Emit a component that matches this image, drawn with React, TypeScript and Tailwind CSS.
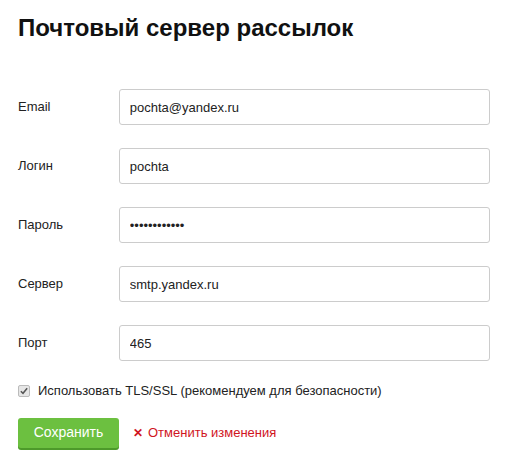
import React from 'react';

const fields = [
  { label: 'Email', value: 'pochta@yandex.ru', type: 'text' },
  { label: 'Логин', value: 'pochta', type: 'text' },
  { label: 'Пароль', value: 'pochtapochta', type: 'password' },
  { label: 'Сервер', value: 'smtp.yandex.ru', type: 'text' },
  { label: 'Порт', value: '465', type: 'text' },
];

const App: React.FC = () => {
  return (
    <div className="w-[530px] h-[475px] bg-white pl-[18px] pr-[40px] pt-[14px] font-['Liberation_Sans',Arial,sans-serif] text-[#222]">
      <h1 className="text-[24px] leading-[28px] font-bold text-[#111]">Почтовый сервер рассылок</h1>

      <div className="mt-[47px] flex flex-col gap-[23px]">
        {fields.map((f) => (
          <div key={f.label} className="flex items-center">
            <label className="w-[101px] text-[13px] text-[#222]">{f.label}</label>
            <input
              type={f.type}
              defaultValue={f.value}
              readOnly
              className="h-[36px] w-[372px] rounded-[3px] border border-[#ccc] px-[10px] text-[13px] text-[#222] outline-none"
            />
          </div>
        ))}
      </div>

      <label className="mt-[20px] flex items-center gap-[8px] text-[13px] text-[#222]">
        {/* greyed checkbox, like the native one in the screenshot */}
        <span className="flex h-[12px] w-[12px] items-center justify-center rounded-[2px] border border-[#bbb] bg-[#e6e6e6]">
          <svg viewBox="0 0 12 12" className="h-[10px] w-[10px]">
            <path d="M2.2 6.3 L4.8 8.8 L9.8 2.8" fill="none" stroke="#555" strokeWidth="1.8" />
          </svg>
        </span>
        Использовать TLS/SSL (рекомендуем для безопасности)
      </label>

      <div className="mt-[17px] flex items-center gap-[14px]">
        <button className="h-[30px] w-[101px] rounded-[3px] bg-[#6cc040] text-[14px] text-white shadow-[0_2px_0_#4d9a2a]">
          Сохранить
        </button>
        <a className="flex items-center gap-[5px] text-[13px] text-[#d0141e]">
          <span className="text-[12px] font-bold">✕</span>
          Отменить изменения
        </a>
      </div>
    </div>
  );
};

export default App;
